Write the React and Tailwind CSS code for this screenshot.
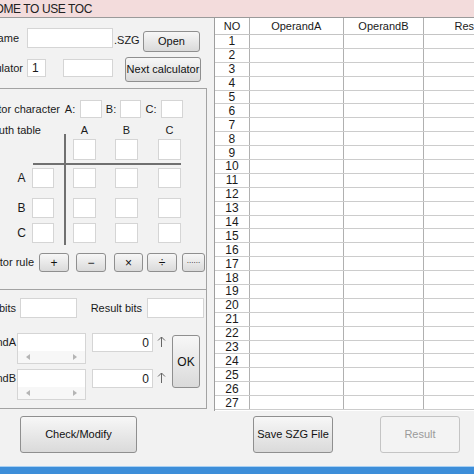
import React from "react";

const Box = ({ className = "", children }) => (
  <div className={`bg-white border border-[#d5d5d5] shrink-0 ${className}`}>{children}</div>
);

const Btn = ({ className = "", children, disabled }) => (
  <div
    className={`shrink-0 flex items-center justify-center rounded-[3px] border ${
      disabled
        ? "border-[#c4c4c4] bg-[#f3f3f3] text-[#9a9a9a]"
        : "border-[#8f8f8f] bg-linear-to-b from-[#f7f7f7] to-[#dadada] text-[#111]"
    } ${className}`}
  >
    {children}
  </div>
);

// label whose text runs off the left edge of the window
const Label = ({ className = "", children }) => (
  <div className={`shrink-0 flex justify-end items-center ${className}`}>
    <span className="shrink-0 whitespace-nowrap">{children}</span>
  </div>
);

const Cells = ({ h = "h-[20px]" }) => (
  <div className="flex">
    <Box className={`ml-[7px] w-[23px] ${h}`} />
    <Box className={`ml-[19px] w-[23px] ${h}`} />
    <Box className={`ml-[20px] w-[23px] ${h}`} />
  </div>
);

const Scroller = () => (
  <div className="h-[12px] bg-[#f7f7f7] flex items-center justify-between px-[8px] text-[#b5b5b5]">
    <svg width="4" height="6" viewBox="0 0 4 6"><path d="M4 0 L0 3 L4 6Z" fill="currentColor" /></svg>
    <svg width="4" height="6" viewBox="0 0 4 6"><path d="M0 0 L4 3 L0 6Z" fill="currentColor" /></svg>
  </div>
);

const UpArrow = () => (
  <svg width="9" height="11" viewBox="0 0 9 11" fill="none" stroke="#666" strokeWidth="1">
    <path d="M4.5 1 V11" />
    <path d="M1 4.5 L4.5 1 L8 4.5" />
  </svg>
);

function OperandRow({ name, className = "" }) {
  return (
    <div className={`flex items-start h-[31px] ${className}`}>
      <Label className="w-[16px] h-[19px]">{name}</Label>
      <div className="ml-[1px] w-[69px] h-[31px] border border-[#d5d5d5] bg-white flex flex-col">
        <div className="h-[18px]" />
        <Scroller />
      </div>
      <Box className="ml-[6px] w-[61px] h-[19px] flex items-center justify-end pr-[3px] text-[12px]">0</Box>
      <div className="w-[19px] h-[19px] flex items-start justify-center pt-[3px] pr-[2px]">
        <UpArrow />
      </div>
    </div>
  );
}

export default function App() {
  const rows = Array.from({ length: 27 }, (_, i) => i + 1);

  return (
    <div className="w-[474px] h-[474px] overflow-hidden bg-[#f2f2f2] flex flex-col text-[11px] text-[#1a1a1a] font-['Liberation_Sans',Arial,sans-serif]">
      {/* title bar */}
      <div className="h-[18px] shrink-0 bg-[#f3dcdc] border-b border-[#9a9a9a] flex items-center">
        <Label className="w-[92px] h-[17px] text-[12px] tracking-[-0.4px] text-[#222]">WELCOME TO USE TOC</Label>
      </div>

      <div className="h-[393px] shrink-0 flex">
        {/* left panel */}
        <div className="w-[214px] shrink-0 flex flex-col">
          <div className="mt-[10px] h-[24px] flex items-start">
            <Label className="w-[19px] h-[20px]">File name</Label>
            <Box className="ml-[8px] w-[86px] h-[20px]" />
            <div className="w-[30px] h-[20px] flex items-end pl-[1px]">.SZG</div>
            <Btn className="mt-[3px] w-[57px] h-[21px]">Open</Btn>
          </div>

          <div className="mt-[5px] h-[25px] flex items-start">
            <Label className="w-[23px] h-[22px]">Calculator</Label>
            <Box className="ml-[4px] mt-[2px] w-[19px] h-[18px] flex items-center pl-[4px] text-[12px]">1</Box>
            <Box className="ml-[17px] mt-[2px] w-[50px] h-[18px]" />
            <Btn className="ml-[12px] w-[76px] h-[25px]">Next calculator</Btn>
          </div>

          {/* operator group */}
          <div className="mt-[6px] w-[207px] h-[201px] shrink-0 border-t border-r border-[#a3a3a3] flex flex-col">
            <div className="mt-[11px] h-[18px] flex items-center">
              <Label className="w-[60px] h-[18px]">Operator character</Label>
              <div className="w-[20px] text-center">A:</div>
              <Box className="w-[22px] h-[18px]" />
              <div className="w-[18px] text-center">B:</div>
              <Box className="w-[21px] h-[18px]" />
              <div className="w-[20px] text-center">C:</div>
              <Box className="w-[22px] h-[18px]" />
            </div>

            <div className="mt-[5px] h-[11px] flex items-start leading-[14px]">
              <Label className="w-[41px] h-[14px]">Truth table</Label>
              <div className="ml-[32px] w-[23px] text-center">A</div>
              <div className="ml-[19px] w-[23px] text-center">B</div>
              <div className="ml-[20px] w-[23px] text-center">C</div>
            </div>

            <div className="h-[29px] flex">
              <div className="w-[64px] shrink-0" />
              <div className="border-l-2 border-[#707070] pt-[5px]">
                <Cells h="h-[21px]" />
              </div>
            </div>
            <div className="ml-[33px] w-[148px] h-[2px] bg-[#707070]" />
            <div className="h-[80px] flex">
              <div className="w-[64px] shrink-0 flex flex-col pt-[3px]">
                {["A", "B", "C"].map((l, i) => (
                  <div key={l} className={`h-[20px] flex items-center ${i === 1 ? "mt-[10px]" : i === 2 ? "mt-[5px]" : ""}`}>
                    <div className="w-[32px] pl-[11px] text-center text-[12px]">{l}</div>
                    <Box className="w-[22px] h-[20px]" />
                  </div>
                ))}
              </div>
              <div className="border-l-2 border-[#707070] flex flex-col pt-[3px]">
                <Cells />
                <div className="mt-[10px]"><Cells /></div>
                <div className="mt-[5px]"><Cells /></div>
              </div>
            </div>

            <div className="mt-[8px] h-[19px] flex items-center">
              <Label className="w-[34px] h-[19px]">Operator rule</Label>
              <Btn className="ml-[5px] w-[30px] h-[19px] text-[12px]">+</Btn>
              <Btn className="ml-[7px] w-[30px] h-[19px] text-[12px]">−</Btn>
              <Btn className="ml-[8px] w-[29px] h-[19px] text-[12px]">×</Btn>
              <Btn className="ml-[4px] w-[30px] h-[19px] text-[12px]">÷</Btn>
              <Btn className="ml-[5px] w-[23px] h-[19px] text-[8px] items-end pb-[4px]">......</Btn>
            </div>
          </div>

          {/* operand group */}
          <div className="w-[207px] h-[120px] shrink-0 border border-l-0 border-[#a3a3a3] flex flex-col">
            <div className="mt-[8px] h-[20px] flex items-center">
              <Label className="w-[16px] h-[20px]">Operand bits</Label>
              <Box className="ml-[4px] w-[57px] h-[20px]" />
              <div className="w-[70px] text-right pr-[5px] whitespace-nowrap">Result bits</div>
              <Box className="w-[57px] h-[20px]" />
            </div>
            <div className="mt-[15px] flex items-start">
              <div className="w-[172px] shrink-0 flex flex-col">
                <OperandRow name="OperandA" />
                <OperandRow name="OperandB" className="mt-[5px]" />
              </div>
              <Btn className="mt-[2px] w-[28px] h-[53px] text-[12px]">OK</Btn>
            </div>
          </div>
        </div>

        {/* result table */}
        <div className="flex-1 overflow-hidden">
          <div className="w-[302px] h-[393px] bg-white border-l border-[#9e9e9e] flex flex-col">
            <div className="h-[17px] shrink-0 flex border-b border-[#c4c4c4]">
              <div className="w-[35px] border-r border-[#b0b0b0] flex items-center justify-center">NO</div>
              <div className="w-[94px] border-r border-[#b0b0b0] flex items-center justify-center">OperandA</div>
              <div className="w-[81px] border-r border-[#b0b0b0] flex items-center justify-center">OperandB</div>
              <div className="w-[92px] flex items-center justify-center">Result</div>
            </div>
            {rows.map((n) => (
              <div key={n} className="h-[13.9px] shrink-0 flex border-b border-[#cccccc]">
                <div className="w-[35px] border-r border-[#b0b0b0] flex items-center justify-center text-[12px] leading-none">{n}</div>
                <div className="w-[94px] border-r border-[#b0b0b0]" />
                <div className="w-[81px] border-r border-[#b0b0b0]" />
                <div className="w-[92px]" />
              </div>
            ))}
          </div>
        </div>
      </div>

      {/* bottom buttons */}
      <div className="h-[55px] shrink-0 flex items-start pt-[5px]">
        <Btn className="ml-[20px] w-[117px] h-[37px]">Check/Modify</Btn>
        <Btn className="ml-[116px] w-[80px] h-[37px] text-[#000]">Save SZG File</Btn>
        <Btn className="ml-[47px] w-[80px] h-[37px]" disabled>Result</Btn>
      </div>

      <div className="h-[8px] shrink-0 bg-[#3d8ed9] border-t border-[#a8d0f3]" />
    </div>
  );
}
